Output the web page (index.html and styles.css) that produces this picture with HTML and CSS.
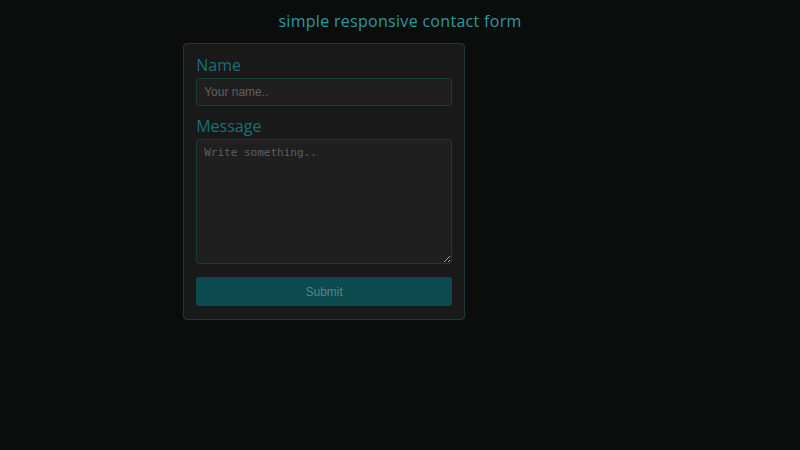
FILE: index.html
```html
<!DOCTYPE html>
<html lang="en">
<head>
  <meta charset="UTF-8" />
  <title>Contact Form</title>
  <link rel="stylesheet" href="styles.css">
</head>
<body>

<h3 class="title">simple responsive contact form</h3>

<div class="container">
  <form>
    <label for="name">Name</label>
    <input type="text" id="name" name="name" placeholder="Your name..">

    <label for="message">Message</label>
    <textarea id="message" name="message" placeholder="Write something.."></textarea>

    <input type="submit" value="Submit">
  </form>
</div>

</body>
</html>
```

FILE: styles.css
```css
body {
  font-family: 'Open Sans', sans-serif;
  margin: 0;
  padding: 0;
  background-color: #0b0d0d;
  min-height: 100vh;
}

.title {
  text-align: center;
  font-weight: normal;
  font-size: 16px;
  letter-spacing: 0.3px;
  color: #2b9aa0;
  margin: 0;
  padding: 10px 0 11px;
}

.container {
  width: 35.25%;
  margin-left: 22.9%;
  box-sizing: border-box;
  background: #191919;
  border: 1px solid #173c40;
  border-radius: 4px;
  padding: 10px 12px 13px;
}

label {
  display: block;
  font-size: 16px;
  color: #157078;
  line-height: 22px;
  margin-top: 0;
}

input[type=text], textarea {
  width: 100%;
  box-sizing: border-box;
  background: #1f1f20;
  border: 1px solid #173c40;
  border-radius: 3px;
  color: #aaa;
  padding: 6px 7px;
  margin: 2px 0 9px;
}

input[type=text] {
  height: 28px;
  font-family: 'Liberation Sans', Arial, sans-serif;
  font-size: 12px;
}

textarea {
  height: 125px;
  resize: vertical;
  font-family: 'DejaVu Sans Mono', monospace;
  font-size: 11px;
  margin-bottom: 13px;
  display: block;
}

::placeholder {
  color: #5f5f5f;
}

input[type=submit] {
  display: block;
  width: 100%;
  height: 29px;
  background-color: #0b4a4e;
  color: #5a8587;
  font-family: 'Liberation Sans', Arial, sans-serif;
  font-size: 12px;
  border: none;
  border-radius: 3px;
  cursor: pointer;
}
```
